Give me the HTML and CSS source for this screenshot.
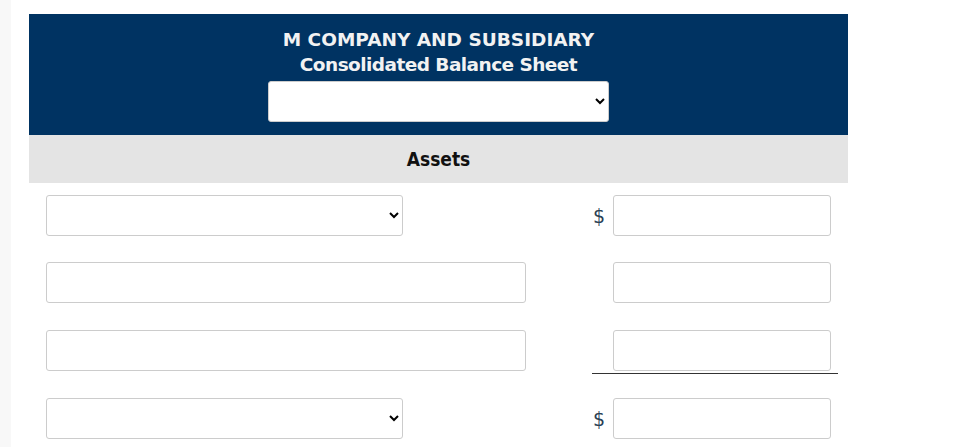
FILE: index.html
```html
<!DOCTYPE html>
<html>
<head>
<meta charset="utf-8">
<link rel="stylesheet" href="styles.css">
</head>
<body>
<div class="page">
  <div class="strip"></div>
  <main class="sheet">
    <header class="sheet-head">
      <div class="title">M COMPANY AND SUBSIDIARY</div>
      <div class="title subtitle">Consolidated Balance Sheet</div>
      <select class="ctl head-select"><option></option></select>
    </header>
    <div class="band">Assets</div>
    <div class="rows">
      <div class="row">
        <div class="left"><select class="ctl sel"><option></option></select></div>
        <div class="right"><span class="cur">$</span><input class="ctl amt" type="text"></div>
      </div>
      <div class="row">
        <div class="left"><input class="ctl wide" type="text"></div>
        <div class="right"><span class="cur"></span><input class="ctl amt" type="text"></div>
      </div>
      <div class="row">
        <div class="left"><input class="ctl wide" type="text"></div>
        <div class="right total"><span class="cur"></span><input class="ctl amt" type="text"></div>
      </div>
      <div class="row">
        <div class="left"><select class="ctl sel"><option></option></select></div>
        <div class="right"><span class="cur">$</span><input class="ctl amt" type="text"></div>
      </div>
    </div>
  </main>
</div>
</body>
</html>
```

FILE: styles.css
```css
html, body {
  margin: 0;
  padding: 0;
  background: #fff;
  font-family: "DejaVu Sans Condensed", "DejaVu Sans", sans-serif;
}
.page {
  display: flex;
  min-height: 447px;
}
.strip {
  width: 11px;
  flex: 0 0 11px;
  background: #f8f8f8;
}
.sheet {
  margin-left: 18px;
  margin-top: 14px;
  width: 819px;
}
.sheet-head {
  background: #003362;
  color: #f2f2f2;
  height: 121px;
  box-sizing: border-box;
  padding-top: 13px;
  display: flex;
  flex-direction: column;
  align-items: center;
}
.title {
  font-family: "DejaVu Sans", sans-serif;
  font-weight: bold;
  font-size: 18.5px;
  line-height: 25px;
  height: 25px;
}
.subtitle {
  letter-spacing: -0.55px;
}
.ctl {
  box-sizing: border-box;
  height: 41px;
  border: 1px solid #cccccc;
  border-radius: 3px;
  background: #fff;
  margin: 0;
  font-size: 14px;
}
.head-select {
  width: 341px;
  margin-top: 4px;
}
.band {
  background: #e4e4e4;
  height: 48px;
  display: flex;
  align-items: center;
  justify-content: center;
  font-weight: bold;
  font-size: 19px;
  color: #111;
}
.rows {
  padding-top: 12px;
  padding-left: 17px;
  display: flex;
  flex-direction: column;
  gap: 27px;
}
.row {
  display: flex;
  align-items: flex-start;
}
.row:first-child {
  margin-bottom: -1px;
}
.left {
  width: 546px;
}
.sel {
  width: 357px;
}
.wide {
  width: 480px;
}
.right {
  display: flex;
  align-items: center;
  width: 239px;
  padding-right: 7px;
}
.right.total {
  padding-bottom: 2px;
  border-bottom: 1px solid #333;
  margin-bottom: -3px;
}
.cur {
  width: 21px;
  padding-left: 1px;
  box-sizing: border-box;
  font-family: "DejaVu Sans", sans-serif;
  font-size: 19px;
  color: #2a3f55;
}
.amt {
  width: 218px;
}
```
